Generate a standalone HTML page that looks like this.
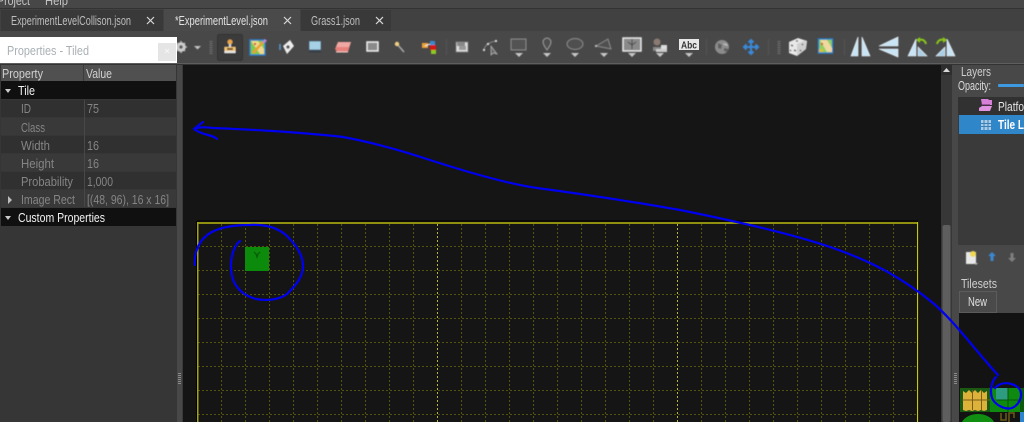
<!DOCTYPE html>
<html><head><meta charset="utf-8"><title>Tiled</title>
<style>
html,body{margin:0;padding:0;background:#484848;width:1024px;height:422px;overflow:hidden}
svg{display:block;position:absolute;left:0;top:0}
text{font-family:"Liberation Sans",sans-serif;font-size:13px}
</style></head><body>
<svg width="1024" height="422" viewBox="0 0 1024 422" xmlns="http://www.w3.org/2000/svg">
<defs><filter id="s" x="-2%" y="-20%" width="104%" height="140%"><feGaussianBlur stdDeviation="0.4"/></filter></defs>
<!-- chrome -->
<rect width="1024" height="422" fill="#484848"/>
<rect y="0" width="1024" height="8" fill="#474747"/>
<rect y="8" width="1024" height="1" fill="#333"/>
<text x="-3" y="5" fill="#c4c4c4" textLength="33" lengthAdjust="spacingAndGlyphs">Project</text>
<text x="45" y="5" fill="#c4c4c4" textLength="23" lengthAdjust="spacingAndGlyphs">Help</text>
<rect y="9" width="1024" height="22" fill="#414141"/>
<rect x="1" y="10" width="162" height="21" fill="#393939"/>
<rect x="164" y="9" width="136" height="23" fill="#4a4a4a"/>
<rect x="301" y="10" width="90" height="21" fill="#393939"/>
<text x="11" y="25" fill="#bdbdbd" textLength="120" lengthAdjust="spacingAndGlyphs">ExperimentLevelCollison.json</text>
<text x="175" y="25" fill="#e2e2e2" textLength="93" lengthAdjust="spacingAndGlyphs">*ExperimentLevel.json</text>
<text x="311" y="25" fill="#bdbdbd" textLength="49" lengthAdjust="spacingAndGlyphs">Grass1.json</text>
<path d="M147 17l7 7m0-7l-7 7M284 17l7 7m0-7l-7 7M376 17l7 7m0-7l-7 7" stroke="#d8d8d8" stroke-width="1.200" fill="none"/>
<rect y="31" width="1024" height="32" fill="#484848"/>
<rect y="63" width="1024" height="1" fill="#5e5e5e"/>
<rect y="64" width="1024" height="1" fill="#333"/>

<!-- canvas -->
<rect x="183" y="65" width="758" height="357" fill="#151515"/>
<path d="M197 221H918M196.500 221V422M918.500 222V422" stroke="#000" fill="none"/>
<path d="M221.500 224V422M245.500 224V422M269.500 224V422M293.500 224V422M317.500 224V422M341.500 224V422M365.500 224V422M389.500 224V422M413.500 224V422M461.500 224V422M485.500 224V422M509.500 224V422M533.500 224V422M557.500 224V422M581.500 224V422M605.500 224V422M629.500 224V422M653.500 224V422M701.500 224V422M725.500 224V422M749.500 224V422M773.500 224V422M797.500 224V422M821.500 224V422M845.500 224V422M869.500 224V422M893.500 224V422M198 246.500H917M198 270.500H917M198 294.500H917M198 318.500H917M198 342.500H917M198 366.500H917M198 390.500H917M198 414.500H917" stroke="#54540f" stroke-dasharray="2 2" fill="none"/>
<path d="M437.500 224V422M677.500 224V422" stroke="#b8b828" stroke-dasharray="2 2" fill="none"/>
<rect x="197" y="222" width="721" height="2" fill="#8f8f10"/>
<rect x="197" y="222" width="1.500" height="200" fill="#a4a414"/>
<rect x="917" y="222" width="1.200" height="200" fill="#c8c810"/>
<rect x="245" y="247" width="24" height="24" fill="#0b8a0b"/>
<path d="M254 252l2 2 1 3 1-3 2-2" stroke="#0a5a0a" stroke-width="1.200" fill="none"/>

<!-- left panel -->
<rect x="0" y="65" width="177" height="357" fill="#363636"/>
<rect x="177" y="65" width="6" height="357" fill="#484848"/>
<rect x="182" y="65" width="1" height="357" fill="#3a3a3a"/>
<path d="M179.500 373v12" stroke="#8a8a8a" stroke-dasharray="1 1" stroke-width="3" fill="none"/>
<rect x="1" y="65" width="175" height="16" fill="#505050"/>
<rect x="83" y="65" width="1" height="16" fill="#3c3c3c"/>
<rect x="1" y="81" width="175" height="18" fill="#101010"/>
<rect x="1" y="100" width="175" height="17" fill="#303030"/>
<rect x="1" y="118" width="175" height="17" fill="#393939"/>
<rect x="1" y="136" width="175" height="17" fill="#303030"/>
<rect x="1" y="154" width="175" height="17" fill="#393939"/>
<rect x="1" y="172" width="175" height="17" fill="#303030"/>
<rect x="1" y="190" width="175" height="17" fill="#393939"/>
<rect x="1" y="208" width="175" height="18" fill="#101010"/>
<rect x="84" y="100" width="1" height="107" fill="#484848"/>
<text x="2" y="78" fill="#d0d0d0" textLength="41" lengthAdjust="spacingAndGlyphs">Property</text>
<text x="86" y="78" fill="#d0d0d0" textLength="26" lengthAdjust="spacingAndGlyphs">Value</text>
<path d="M5 89h6l-3 4z" fill="#ccc"/>
<text x="18" y="95" fill="#f2f2f2" textLength="17" lengthAdjust="spacingAndGlyphs">Tile</text>
<g fill="#858585">
<text x="21" y="113" textLength="10" lengthAdjust="spacingAndGlyphs">ID</text>
<text x="87" y="113" textLength="12" lengthAdjust="spacingAndGlyphs">75</text>
<text x="21" y="132" textLength="24" lengthAdjust="spacingAndGlyphs">Class</text>
<text x="21" y="150" textLength="29" lengthAdjust="spacingAndGlyphs">Width</text>
<text x="87" y="150" textLength="12" lengthAdjust="spacingAndGlyphs">16</text>
<text x="21" y="168" textLength="33" lengthAdjust="spacingAndGlyphs">Height</text>
<text x="87" y="168" textLength="12" lengthAdjust="spacingAndGlyphs">16</text>
<text x="21" y="186" textLength="52" lengthAdjust="spacingAndGlyphs">Probability</text>
<text x="87" y="186" textLength="26" lengthAdjust="spacingAndGlyphs">1,000</text>
<text x="21" y="204" textLength="54" lengthAdjust="spacingAndGlyphs">Image Rect</text>
<text x="87" y="204" textLength="82" lengthAdjust="spacingAndGlyphs">[(48, 96), 16 x 16]</text>
</g>
<path d="M8 196v8l4-4z" fill="#bbb"/>
<path d="M5 216h6l-3 4z" fill="#ccc"/>
<text x="18" y="222" fill="#f2f2f2" textLength="87" lengthAdjust="spacingAndGlyphs">Custom Properties</text>

<!-- toolbar icons -->
<g filter="url(#s)">
<circle cx="181" cy="47" r="3.500" fill="#555" stroke="#d4d4d4" stroke-width="2.500"/>
<path d="M181 41v12M175 47h12M177 43l8 8M185 43l-8 8" stroke="#c8c8c8" stroke-width="1.300"/><circle cx="181" cy="47" r="1.600" fill="#555"/>
<path d="M194 46h7l-3.500 3.500z" fill="#c4c4c4"/>
<path d="M211 41v14" stroke="#6e6e6e" stroke-width="3" stroke-dasharray="1 1"/>
<rect x="217.500" y="34.500" width="25" height="26" rx="2" fill="#3a3a3a" stroke="#333"/>
<circle cx="230" cy="42" r="2.500" fill="#e8a64a"/>
<path d="M229 44h2v3h-2z" fill="#d8d8d8"/>
<path d="M224.500 47h11v4h-11z" fill="#f2c67a"/><path d="M224.500 51h11v2h-11z" fill="#e8e8e8"/><rect x="227" y="48" width="6" height="2" fill="#6a4a1a"/>
<!-- terrain -->
<rect x="250" y="40" width="15" height="15" fill="#7fc94e" stroke="#2f7fd0" stroke-width="1.500"/>
<path d="M251 41l7 0 6 8v5h-4z" fill="#efd98c"/><path d="M253 53l10-11" stroke="#e8a030" stroke-width="2.500"/><path d="M262 42l3-3 2 2-3 2z" fill="#c088d8"/><rect x="254" y="43" width="2" height="2" fill="#d83030"/>
<!-- bucket -->
<path d="M280 44v6" stroke="#5a9ad8" stroke-width="1.500"/><path d="M283 46l7-6 4 6-7 8z" fill="#eee"/><circle cx="288" cy="47" r="1.700" fill="#555"/>
<!-- fill rect -->
<rect x="309" y="41" width="12" height="9" fill="#a6d0e6" stroke="#4a5a6a"/><rect x="309" y="51" width="12" height="1.500" fill="#333d48"/>
<!-- eraser -->
<path d="M338 42h13l-3 10h-11l-2-3z" fill="#e8807c"/><path d="M338 42h13l-2 5h-13z" fill="#f0a8a4"/><path d="M336 52h12" stroke="#f4d0cc"/>
<!-- rect select -->
<rect x="367" y="42" width="11" height="9" fill="#8a8a8a" stroke="#eee" stroke-width="1.500"/>
<!-- wand -->
<path d="M397 44l7 8" stroke="#aaa" stroke-width="1.500"/><circle cx="397" cy="44" r="2.200" fill="#f0d080"/>
<!-- same tile -->
<rect x="422" y="43" width="6" height="5" fill="#f0a030"/><rect x="430" y="41" width="5" height="4" fill="#3a8ad0"/><rect x="430" y="45" width="6" height="5" fill="#d81818"/><rect x="431" y="50" width="5" height="4" fill="#8fc820"/><path d="M425 46l5-2" stroke="#eee"/>
<path d="M446.500 39v16M706.500 39v16M768.500 39v16M844.500 39v16" stroke="#555"/>
<!-- object select -->
<rect x="456" y="42" width="12" height="10" fill="#ddd" stroke="#777"/><rect x="457" y="42" width="8" height="4" fill="#888"/><rect x="459" y="46" width="7" height="4" fill="#999"/>
<!-- edit polygon -->
<path d="M484 50q1-7 12-9" stroke="#888" fill="none"/><rect x="483" y="49" width="2" height="2" fill="#ddd"/><rect x="487" y="43" width="2" height="2" fill="#ddd"/><rect x="495" y="40" width="2" height="2" fill="#ddd"/><path d="M491 46v9l2.500-2 3.500 1-6-8z" fill="#666" stroke="#bbb" stroke-width=".7"/>
<!-- rect obj -->
<rect x="511" y="39" width="15" height="11" fill="#535353" stroke="#8a8a8a"/>
<!-- point -->
<path d="M547 50c-3-4-4-6-4-8a4 4 0 018 0c0 2-1 4-4 8z" fill="#505050" stroke="#9a9a9a"/>
<!-- ellipse -->
<ellipse cx="575" cy="44" rx="8" ry="5.500" fill="#505050" stroke="#8a8a8a"/>
<!-- poly -->
<path d="M596 46l12-7 3 10z" fill="#505050" stroke="#8a8a8a"/><rect x="595" y="45" width="2" height="2" fill="#bbb"/>
<!-- triangles under tools -->
<path d="M515 53h8l-4 4zM543 53h8l-4 4zM571 53h8l-4 4zM600 53h8l-4 4zM628 53h8l-4 4zM656 53h8l-4 4zM685 53h8l-4 4z" fill="#c8c8c8"/>
<!-- image -->
<rect x="623" y="38" width="18" height="13" fill="#8a8a8a" stroke="#e8e8e8" stroke-width="1.500"/><path d="M632 39v10M628 42l4 3 4-3" stroke="#444" fill="none"/>
<!-- tile obj -->
<circle cx="657" cy="42" r="3.500" fill="#8a7a72"/><path d="M653 51v-4h8v4z" fill="#888"/><rect x="661" y="45" width="6" height="6" fill="#ddd"/><rect x="656" y="49" width="11" height="3" fill="#ccc"/>
<!-- world -->
<circle cx="722" cy="47" r="7" fill="#8c8c8c"/><path d="M718 43l4 2-1 4-3-1zM724 48l5 1-2 3-3-1z" fill="#5e5e5e"/><path d="M723 43l4 1 1 2-4-1z" fill="#bbb"/>
<!-- move -->
<path d="M751 40v14M744 47h14M748.500 42.500l2.500-2.500 2.500 2.500M748.500 51.500l2.500 2.500 2.500-2.500M746.500 44.500l-2.500 2.500 2.500 2.500M755.500 44.500l2.500 2.500-2.500 2.500" stroke="#3a88d8" stroke-width="2" fill="none"/>
<path d="M779 41v14" stroke="#6e6e6e" stroke-width="3" stroke-dasharray="1 1"/>
<!-- dice -->
<path d="M789 42l9-4 9 3-1 8-9 7-8-3z" fill="#e8e8e8"/><path d="M797 44l9-4 0 9-9 7z" fill="#cfcfcf"/><path d="M791 45l2 1M794 50l2 1M802 44l1 1M800 50l1 1M796 41l2 0M790 50l1 1" stroke="#444" stroke-width="1.300"/>
<!-- stamp terrain -->
<rect x="818.500" y="39" width="14" height="14" fill="#8fd060" stroke="#2f7fd0" stroke-width="1.500"/><path d="M820 40h7l5 8v4h-5z" fill="#efd9a0"/><rect x="821" y="43" width="2" height="2" fill="#d83030"/><rect x="819" y="49" width="4" height="3" fill="#d8c030"/>
<!-- flips -->
<g fill="#c8e4f5" stroke="#f4fbff" stroke-width=".6">
<path d="M851 56l7-19v19z"/><path d="M862 37v19h8z"/>
<path d="M879 46l19-9v9z"/><path d="M879 49h19v8z"/>
<path d="M908 56l8-17v17z"/><path d="M918 47l9 9h-9z" fill="#a8cfe8"/>
<path d="M936 56l9-9v9z" fill="#a8cfe8"/><path d="M947 39l8 17h-8z"/>
</g>
<path d="M926 44c-1-4-4-5-7-4M937 44c1-4 4-5 7-4" stroke="#8ac818" stroke-width="2" fill="none"/>
<path d="M920 37v6l-4-3zM943 37v6l4-3z" fill="#8ac818"/>
</g>

<!-- floating title -->
<rect x="0" y="37" width="177" height="26" fill="#fff"/>
<text x="7" y="55" fill="#a9b0b4" textLength="82" lengthAdjust="spacingAndGlyphs">Properties - Tiled</text>
<rect x="158" y="43" width="18" height="18" fill="#e5e5e5"/>
<path d="M165 49l4 4m0-4l-4 4" stroke="#f5f5f5" fill="none"/>

<!-- Abc -->
<rect x="679" y="39" width="20" height="11" fill="#e8e8e8"/>
<text x="681" y="48.500" style="font-size:10px;font-weight:bold" fill="#333" textLength="16" lengthAdjust="spacingAndGlyphs">Abc</text>

<!-- scrollbar -->
<rect x="941" y="65" width="11" height="357" fill="#373737"/>
<rect x="941" y="65" width="11" height="10" fill="#2e2e2e"/>
<path d="M943 72h7l-3.500-4z" fill="#d8d8d8"/>
<rect x="942.500" y="225" width="8" height="197" rx="2" fill="#5e5e5e"/>

<!-- right panel -->
<rect x="952" y="65" width="72" height="357" fill="#484848"/>
<path d="M955.500 373v12" stroke="#8a8a8a" stroke-dasharray="1 1" stroke-width="3" fill="none"/>
<text x="961" y="76" fill="#cfcfcf" textLength="30" lengthAdjust="spacingAndGlyphs">Layers</text>
<text x="958" y="90" fill="#dcdcdc" textLength="33" lengthAdjust="spacingAndGlyphs">Opacity:</text>
<rect x="998" y="84" width="26" height="3" rx="1" fill="#3d9ae0"/>
<rect x="958" y="97" width="66" height="148" fill="#3a3a3a"/>
<rect x="958" y="97" width="66" height="18" fill="#313131"/>
<rect x="959" y="115" width="65" height="19" fill="#2f86c8"/>
<path d="M981 99h7l1 1h3v5h-10z" fill="#d87fd8"/><path d="M979 108l3-2h10l-2 5h-11z" fill="#e094e0"/><path d="M981 105h9" stroke="#5a2a5a"/>
<text x="998" y="111" fill="#e4e4e4" textLength="26" lengthAdjust="spacingAndGlyphs">Platfo</text>
<rect x="981" y="120" width="10" height="10" fill="#a8cce8"/>
<path d="M984 120v10M988 120v10M981 123.500h10M981 126.500h10" stroke="#3b7fb5"/>
<text x="998" y="129" fill="#fff" style="font-weight:bold" textLength="26" lengthAdjust="spacingAndGlyphs">Tile L</text>
<!-- layer buttons -->
<g filter="url(#s)">
<path d="M966 252h10v12h-10z" fill="#e8e8e8"/><circle cx="973" cy="254" r="3" fill="#f0d850"/><path d="M974 263h4l-2 2z" fill="#bbb"/>
<path d="M992 252l4 4h-2.500v5h-3v-5H988z" fill="#3a88d0"/>
<path d="M1012 262l4-4h-2.500v-5h-3v5H1008z" fill="#7f7f7f"/>
</g>
<text x="961" y="288" fill="#cfcfcf" textLength="36" lengthAdjust="spacingAndGlyphs">Tilesets</text>
<rect x="959.500" y="291.500" width="37" height="21" fill="#4a4a4a" stroke="#5c5c5c"/>
<text x="968" y="306" fill="#e0e0e0" textLength="19" lengthAdjust="spacingAndGlyphs">New</text>
<rect x="959" y="313" width="65" height="109" fill="#131313"/>
<!-- tiles -->
<rect x="960" y="388" width="36" height="24" fill="#1a5a12"/>
<path d="M963 391l3 2 3-3 3 3 3-3 3 3 3-3 3 3 3-2v19l-3 1-3-1-3 1-3-1-3 1-3-1-3 1-3-1z" fill="#dcb23a"/>
<path d="M972.500 390v20M981.500 390v20M962 400h28" stroke="#7a5c18"/>
<rect x="990" y="388" width="34" height="24" fill="#0e8a10"/>
<rect x="996" y="388" width="12" height="12" fill="#2e9c80"/>
<path d="M996 400h24M1008 388v24" stroke="#07570a"/>
<rect x="1020" y="388" width="4" height="24" fill="#0b5a0d"/>
<path d="M962 422a17 12 0 0132 0z" fill="#0f8e12"/>
<rect x="1020" y="412" width="4" height="10" fill="#2c84cf"/>
<path d="M1001 413v7h5v-7M1009 422v-9h5v5" stroke="#6a5a14" stroke-width="1.500" fill="none"/>

<!-- blue annotations -->
<g fill="none" stroke="#0000f0" stroke-width="2.200" stroke-linecap="round" stroke-linejoin="round">
<path d="M203 122L194 129C198 132 204 134 208 135C212 136 215 137 217 139"/>
<path d="M195 129C198 127 205 127 213 128C240 129 300 132 343 137C370 142 400 150 430 160C470 173 510 184 537 188C590 195 640 203 680 210C730 220 790 233 833 248C870 261 900 276 933 303C955 322 975 350 998 375"/>
<path d="M195 265C194 254 198 243 205 237C214 228 230 225 250 225C268 224 280 229 288 237C298 247 303 256 303 266C303 277 296 285 287 294C279 300 266 301 256 299C245 296 238 290 234 282C230 272 230 262 233 252C235 247 237 243 240 241"/>
<path d="M996 377C991 382 990 392 992 398C995 405 1005 410 1012 408C1019 405 1023 396 1020 390C1016 383 1002 380 995 388"/>
</g>
</svg>
</body></html>
